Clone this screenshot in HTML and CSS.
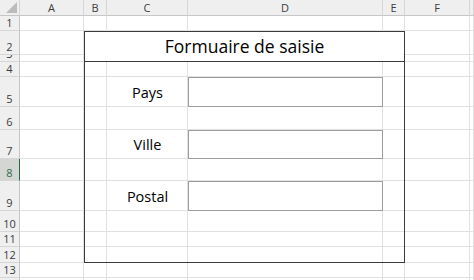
FILE: index.html
```html
<!doctype html>
<html>
   <head>
      <title>Formuaire de saisie</title>
      <link rel="stylesheet" href="styles.css">
   </head>
   <body>
      <div class="sheet">
         <div class="cells">
            <div class="ch corner"></div><div class="ch">A</div><div class="ch">B</div><div class="ch">C</div><div class="ch">D</div><div class="ch">E</div><div class="ch">F</div><div class="ch"></div>
            <div class="rh">1</div><div class="c"></div><div class="c"></div><div class="c"></div><div class="c"></div><div class="c"></div><div class="c"></div><div class="c"></div>
            <div class="rh">2</div><div class="c"></div><div class="c"></div><div class="c"></div><div class="c"></div><div class="c"></div><div class="c"></div><div class="c"></div>
            <div class="rh">3</div><div class="c"></div><div class="c"></div><div class="c"></div><div class="c"></div><div class="c"></div><div class="c"></div><div class="c"></div>
            <div class="rh">4</div><div class="c"></div><div class="c"></div><div class="c"></div><div class="c"></div><div class="c"></div><div class="c"></div><div class="c"></div>
            <div class="rh">5</div><div class="c"></div><div class="c"></div><div class="c"></div><div class="c"></div><div class="c"></div><div class="c"></div><div class="c"></div>
            <div class="rh">6</div><div class="c"></div><div class="c"></div><div class="c"></div><div class="c"></div><div class="c"></div><div class="c"></div><div class="c"></div>
            <div class="rh">7</div><div class="c"></div><div class="c"></div><div class="c"></div><div class="c"></div><div class="c"></div><div class="c"></div><div class="c"></div>
            <div class="rh sel">8</div><div class="c"></div><div class="c"></div><div class="c"></div><div class="c"></div><div class="c"></div><div class="c"></div><div class="c"></div>
            <div class="rh">9</div><div class="c"></div><div class="c"></div><div class="c"></div><div class="c"></div><div class="c"></div><div class="c"></div><div class="c"></div>
            <div class="rh">10</div><div class="c"></div><div class="c"></div><div class="c"></div><div class="c"></div><div class="c"></div><div class="c"></div><div class="c"></div>
            <div class="rh">11</div><div class="c"></div><div class="c"></div><div class="c"></div><div class="c"></div><div class="c"></div><div class="c"></div><div class="c"></div>
            <div class="rh">12</div><div class="c"></div><div class="c"></div><div class="c"></div><div class="c"></div><div class="c"></div><div class="c"></div><div class="c"></div>
            <div class="rh">13</div><div class="c"></div><div class="c"></div><div class="c"></div><div class="c"></div><div class="c"></div><div class="c"></div><div class="c"></div>
            <div class="rh"></div><div class="c"></div><div class="c"></div><div class="c"></div><div class="c"></div><div class="c"></div><div class="c"></div><div class="c"></div>
         </div>

         <div class="form">
            <div class="title">Formuaire de saisie</div>
            <div class="label row5">Pays</div>
            <div class="field row5"></div>
            <div class="label row7">Ville</div>
            <div class="field row7"></div>
            <div class="label row9">Postal</div>
            <div class="field row9"></div>
            <div class="box"></div>
         </div>
      </div>
   </body>
</html>
```

FILE: styles.css
```css
/* General Reset */
* {
   margin: 0;
   padding: 0;
   box-sizing: border-box;
}

body {
   font-family: 'Open Sans', sans-serif;
   background: #ffffff;
   color: #000000;
   width: 474px;
   height: 280px;
   overflow: hidden;
}

/* Both layers share one grid cell */
.sheet {
   display: grid;
   width: 474px;
   height: 280px;
}

.cells,
.form {
   grid-area: 1 / 1;
   display: grid;
   grid-template-columns: 20px 64px 23px 81px 195px 22px 65px 1fr;
   grid-template-rows: 16px 15px 24px 7px 15px 30px 23px 29px 22px 30px 21px 15px 16px 15px 1fr;
}

/* Grid cells */
.c {
   border-right: 1px solid #e1e1e1;
   border-bottom: 1px solid #e1e1e1;
}

/* Column headers */
.ch {
   background: #efefef;
   border-right: 1px solid #d6d6d6;
   border-bottom: 1px solid #c6c6c6;
   font-size: 11px;
   color: #3c3c3c;
   display: flex;
   align-items: center;
   justify-content: center;
   line-height: 1;
}

.corner {
   align-items: flex-end;
   justify-content: flex-end;
   padding: 0 2px 2px 0;
}

.corner::after {
   content: '';
   width: 0;
   height: 0;
   border-left: 11px solid transparent;
   border-bottom: 11px solid #bcbcbc;
}

/* Row headers */
.rh {
   background: #efefef;
   border-right: 1px solid #c6c6c6;
   border-bottom: 1px solid #d6d6d6;
   font-size: 11px;
   color: #3c3c3c;
   display: flex;
   align-items: flex-end;
   justify-content: center;
   line-height: 1;
   padding-bottom: 2px;
   overflow: hidden;
}

.rh.sel {
   background: #d4d6d4;
   color: #2f6b48;
   border-right: 1px solid #1e7145;
}

/* Form */
.title {
   grid-column: 3 / 7;
   grid-row: 3 / 5;
   background: #ffffff;
   border-bottom: 1px solid #3a3a3a;
   font-size: 17.5px;
   display: flex;
   align-items: center;
   justify-content: center;
}

.box {
   grid-column: 3 / 7;
   grid-row: 3 / 14;
   border: 1px solid #3a3a3a;
}

.label {
   grid-column: 4;
   font-size: 14.5px;
   display: flex;
   align-items: center;
   justify-content: center;
}

.field {
   grid-column: 5;
   background: #ffffff;
   border: 1px solid #9c9c9c;
}

.row5 { grid-row: 6; }
.row7 { grid-row: 8; }
.row9 { grid-row: 10; }
```
